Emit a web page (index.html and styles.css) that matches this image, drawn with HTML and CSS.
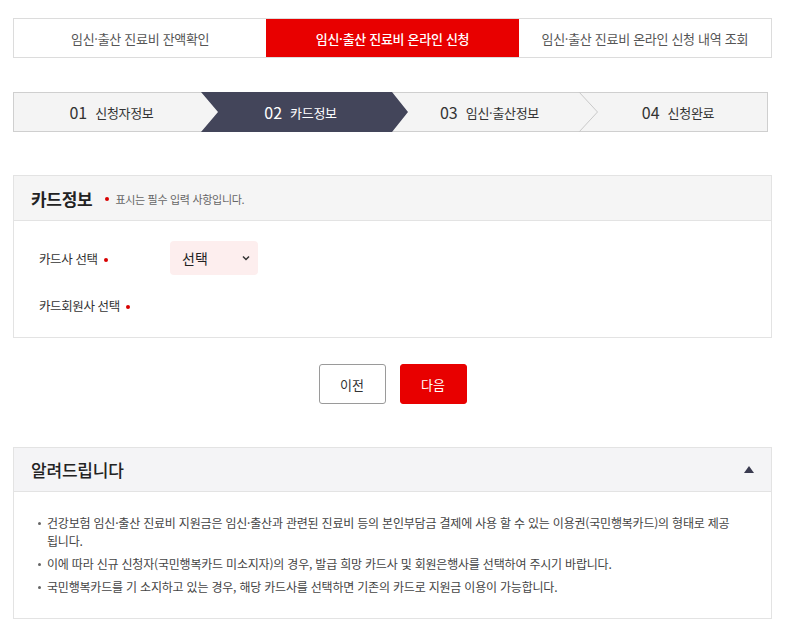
FILE: index.html
```html
<!DOCTYPE html>
<html lang="ko">
<head>
<meta charset="utf-8">
<link rel="stylesheet" href="styles.css">
</head>
<body>
<div class="page">
  <nav class="tabs">
    <a class="tab">임신·출산 진료비 잔액확인</a>
    <a class="tab active">임신·출산 진료비 온라인 신청</a>
    <a class="tab">임신·출산 진료비 온라인 신청 내역 조회</a>
  </nav>

  <ol class="steps">
    <li class="step s1"><span class="num">01</span><span class="lbl">신청자정보</span></li>
    <li class="step s2 current"><span class="num">02</span><span class="lbl">카드정보</span></li>
    <li class="step s3"><span class="num">03</span><span class="lbl">임신·출산정보</span>
      <svg class="sep" width="22" height="40" viewBox="0 0 22 40"><polyline points="1,0 19.5,20 1,40" fill="none" stroke="#c9c9c9" stroke-width="1"/></svg>
    </li>
    <li class="step s4"><span class="num">04</span><span class="lbl">신청완료</span></li>
  </ol>

  <section class="box card">
    <header class="box-head">
      <h2 class="box-title">카드정보</h2>
      <span class="req-note"><i class="dot"></i>표시는 필수 입력 사항입니다.</span>
    </header>
    <div class="box-body form">
      <div class="row">
        <label class="lbl-field">카드사 선택 <i class="dot"></i></label>
        <div class="select">선택
          <svg class="chev" width="8" height="6" viewBox="0 0 8 6"><polyline points="1,1.5 4,4.5 7,1.5" fill="none" stroke="#333" stroke-width="1.5"/></svg>
        </div>
      </div>
      <div class="row">
        <label class="lbl-field">카드회원사 선택 <i class="dot"></i></label>
      </div>
    </div>
  </section>

  <div class="buttons">
    <button class="btn prev">이전</button>
    <button class="btn next">다음</button>
  </div>

  <section class="box notice">
    <header class="box-head notice-head">
      <h2 class="notice-title">알려드립니다</h2>
      <span class="tri"></span>
    </header>
    <div class="box-body">
      <ul class="bullets">
        <li>건강보험 임신·출산 진료비 지원금은 임신·출산과 관련된 진료비 등의 본인부담금 결제에 사용 할 수 있는 이용권(국민행복카드)의 형태로 제공 됩니다.</li>
        <li>이에 따라 신규 신청자(국민행복카드 미소지자)의 경우, 발급 희망 카드사 및 회원은행사를 선택하여 주시기 바랍니다.</li>
        <li>국민행복카드를 기 소지하고 있는 경우, 해당 카드사를 선택하면 기존의 카드로 지원금 이용이 가능합니다.</li>
      </ul>
    </div>
  </section>
</div>
</body>
</html>
```

FILE: styles.css
```css
* { box-sizing: border-box; margin: 0; padding: 0; }
html, body { background: #fff; }
body {
  font-family: "Noto Sans CJK KR", "Noto Sans", sans-serif;
  color: #333;
}
.page {
  width: 759px;
  margin-left: 13px;
  padding-top: 18px;
}

/* tabs */
.tabs {
  display: flex;
  height: 40px;
  border: 1px solid #dcdcdc;
}
.tab {
  flex: 1;
  display: flex;
  align-items: center;
  justify-content: center;
  font-size: 13px;
  color: #555;
  letter-spacing: -0.3px;
}
.tab.active {
  background: #e80000;
  color: #fff;
  font-weight: 500;
}

/* steps */
.steps {
  list-style: none;
  display: flex;
  width: 755px;
  height: 40px;
  margin-top: 34px;
  background: #f4f4f4;
  border: 1px solid #cfcfcf;
}
.step {
  position: relative;
  display: flex;
  align-items: center;
  justify-content: center;
  gap: 8px;
  color: #333;
}
.num { font-size: 16px; font-weight: 400; letter-spacing: 0; }
.lbl { font-size: 13px; letter-spacing: -0.3px; }
.s1 { width: 187px; padding-left: 8px; }
.s2 {
  width: 207px;
  margin: -1px -16px -1px 0;
  height: 40px;
  background: #43455a;
  color: #fff;
  padding-right: 8px;
  clip-path: polygon(0 0, calc(100% - 16px) 0, 100% 50%, calc(100% - 16px) 100%, 0 100%, 17px 50%);
}
.s3 { width: 187px; padding-left: 8px; }
.s4 { flex: 1; padding-left: 10px; }
.sep { position: absolute; right: -21px; top: -1px; }

/* boxes */
.box {
  border: 1px solid #e3e3e3;
}
.box-head {
  display: flex;
  align-items: center;
  background: #f5f5f5;
  border-bottom: 1px solid #e3e3e3;
  padding-left: 17px;
}
.card { margin-top: 43px; }
.card .box-head { height: 45px; }
.box-title {
  font-size: 17px;
  font-weight: 700;
  color: #222;
  letter-spacing: -0.3px;
}
.req-note {
  display: flex;
  align-items: center;
  font-size: 11px;
  color: #666;
  margin-left: 13px;
  margin-top: 2px;
  letter-spacing: -0.3px;
}
.dot {
  display: inline-block;
  width: 4px;
  height: 4px;
  border-radius: 50%;
  background: #d80000;
  margin-right: 6px;
}
.lbl-field .dot { margin: 0 0 0 3px; vertical-align: 2px; }

.form { padding: 20px 0 15px 25px; }
.row {
  display: flex;
  align-items: center;
  height: 34px;
}
.row + .row { margin-top: 13px; }
.lbl-field {
  width: 131px;
  font-size: 12.5px;
  color: #333;
  letter-spacing: -0.4px;
}
.select {
  display: flex;
  align-items: center;
  justify-content: space-between;
  width: 88px;
  height: 34px;
  padding: 0 8px 0 12px;
  background: #fdeeee;
  border-radius: 4px;
  font-size: 14px;
  color: #222;
}

/* buttons */
.buttons {
  display: flex;
  justify-content: center;
  gap: 14px;
  margin-top: 26px;
}
.btn {
  width: 67px;
  height: 40px;
  border-radius: 3px;
  font-family: inherit;
  font-size: 13px;
}
.prev { background: #fff; border: 1px solid #9a9a9a; color: #333; }
.next { background: #e80000; border: 1px solid #e80000; color: #fff; }

/* notice */
.notice { margin-top: 43px; }
.notice-head {
  height: 44px;
  justify-content: space-between;
  padding-right: 17px;
  background: #f4f4f6;
}
.notice-title {
  font-size: 17px;
  font-weight: 500;
  color: #222;
  letter-spacing: -0.2px;
}
.tri {
  width: 0; height: 0;
  border-left: 5px solid transparent;
  border-right: 5px solid transparent;
  border-bottom: 7px solid #3a3b50;
}
.notice .box-body { padding: 22px 20px 22px 24px; }
.bullets { list-style: none; }
.bullets li {
  position: relative;
  padding-left: 9px;
  font-size: 12px;
  line-height: 18px;
  color: #444;
  letter-spacing: -0.2px;
  word-break: keep-all;
}
.bullets li + li { margin-top: 5px; }
.bullets li::before {
  content: "";
  position: absolute;
  left: 0;
  top: 8px;
  width: 3px;
  height: 3px;
  border-radius: 50%;
  background: #666;
}
```
